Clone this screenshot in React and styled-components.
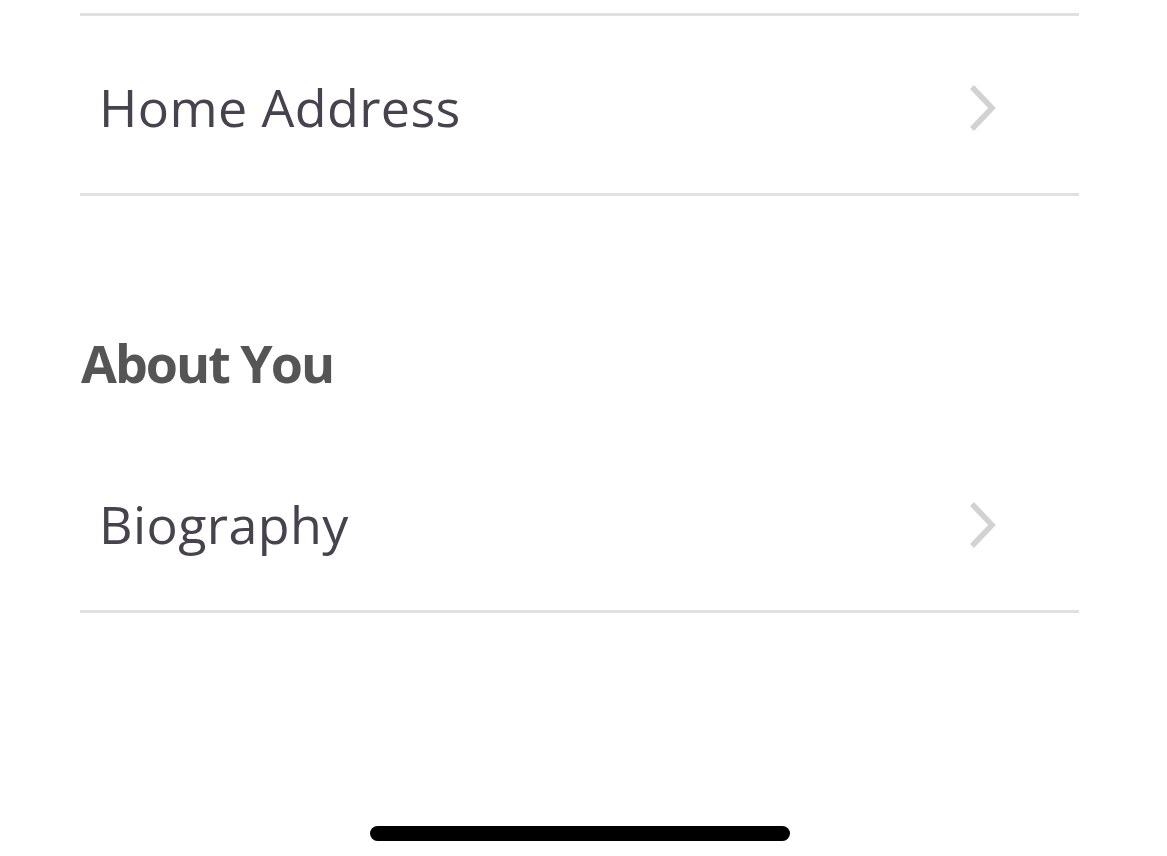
import React from "react";
import styled, { createGlobalStyle } from "styled-components";

const GlobalStyle = createGlobalStyle`
  html, body {
    margin: 0;
    padding: 0;
    background: #ffffff;
  }
  body {
    font-family: "Open Sans", "Noto Sans", sans-serif;
  }
`;

const Page = styled.div`
  height: 100vh;
  display: flex;
  flex-direction: column;
  background: #ffffff;
  overflow: hidden;
`;

const Content = styled.div`
  padding: 13px 88px 0 80px;
  flex: 1;
`;

const List = styled.div`
  border-top: 3px solid #e1e1e1;
`;

const Row = styled.div`
  box-sizing: content-box;
  height: 171px;
  padding: 6px 81px 0 19px;
  border-bottom: 3px solid #e1e1e1;
  display: flex;
  align-items: center;
  justify-content: space-between;
  cursor: pointer;
`;

const Label = styled.span`
  font-size: 52px;
  letter-spacing: 0.4px;
  color: #46434f;
  line-height: 1.2;
`;

const SectionTitle = styled.h2`
  margin: 135px 0 38px 1px;
  font-size: 52px;
  font-weight: 700;
  letter-spacing: -2px;
  line-height: 64px;
  color: #555555;
`;

const HomeBar = styled.div`
  align-self: center;
  width: 420px;
  height: 15px;
  border-radius: 8px;
  background: #000000;
  margin: 0 7px 15px 0;
`;

function Chevron() {
  return (
    <svg width="30" height="48" viewBox="0 0 30 48" fill="none">
      <path d="M4 3 L24 24 L4 45" stroke="#d2d2d2" strokeWidth="5.5" />
    </svg>
  );
}

function SettingRow({ label }) {
  return (
    <Row>
      <Label>{label}</Label>
      <Chevron />
    </Row>
  );
}

export default function App() {
  return (
    <Page>
      <GlobalStyle />
      <Content>
        <List>
          <SettingRow label="Home Address" />
        </List>
        <SectionTitle>About You</SectionTitle>
        <SettingRow label="Biography" />
      </Content>
      <HomeBar />
    </Page>
  );
}
